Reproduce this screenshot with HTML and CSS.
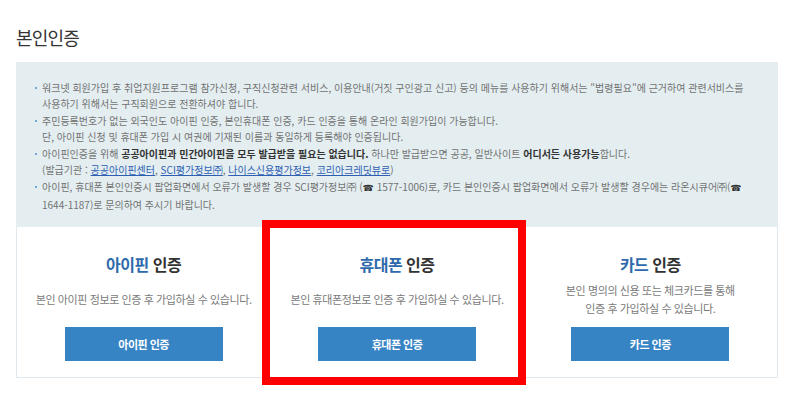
FILE: index.html
```html
<!DOCTYPE html>
<html lang="ko">
<head>
<meta charset="utf-8">
<link rel="stylesheet" href="styles.css">
</head>
<body>
<div class="page">
  <h1 class="title">본인인증</h1>
  <div class="info">
    <ul class="notes">
      <li>워크넷 회원가입 후 취업지원프로그램 참가신청, 구직신청관련 서비스, 이용안내(거짓 구인광고 신고) 등의 메뉴를 사용하기 위해서는 "법령필요"에 근거하여 관련서비스를<br>사용하기 위해서는 구직회원으로 전환하셔야 합니다.</li>
      <li>주민등록번호가 없는 외국인도 아이핀 인증, 본인휴대폰 인증, 카드 인증을 통해 온라인 회원가입이 가능합니다.<br>단, 아이핀 신청 및 휴대폰 가입 시 여권에 기재된 이름과 동일하게 등록해야 인증됩니다.</li>
      <li>아이핀인증을 위해 <b>공공아이핀과 민간아이핀을 모두 발급받을 필요는 없습니다.</b> 하나만 발급받으면 공공, 일반사이트 <b>어디서든 사용가능</b>합니다.<br>(발급기관 : <a href="#">공공아이핀센터</a>, <a href="#">SCI평가정보㈜</a>, <a href="#">나이스신용평가정보</a>, <a href="#">코리아크레딧뷰로</a>)</li>
      <li>아이핀, 휴대폰 본인인증시 팝업화면에서 오류가 발생할 경우 SCI평가정보㈜ (<span class="tel">☎</span> 1577-1006)로, 카드 본인인증시 팝업화면에서 오류가 발생할 경우에는 라온시큐어㈜(<span class="tel">☎</span><br>1644-1187)로 문의하여 주시기 바랍니다.</li>
    </ul>
  </div>
  <div class="cards">
    <div class="card">
      <h2 class="card-title"><span class="accent">아이핀</span> 인증</h2>
      <p class="card-desc">본인 아이핀 정보로 인증 후 가입하실 수 있습니다.</p>
      <a class="btn" href="#">아이핀 인증</a>
    </div>
    <div class="card">
      <h2 class="card-title"><span class="accent">휴대폰</span> 인증</h2>
      <p class="card-desc">본인 휴대폰정보로 인증 후 가입하실 수 있습니다.</p>
      <a class="btn" href="#">휴대폰 인증</a>
    </div>
    <div class="card">
      <h2 class="card-title"><span class="accent">카드</span> 인증</h2>
      <p class="card-desc">본인 명의의 신용 또는 체크카드를 통해<br>인증 후 가입하실 수 있습니다.</p>
      <a class="btn" href="#">카드 인증</a>
    </div>
  </div>
  <div class="highlight"></div>
</div>
</body>
</html>
```
FILE: styles.css
```css
* { box-sizing: border-box; }
html, body { margin: 0; padding: 0; background: #fff; }
body {
  font-family: "Noto Sans CJK KR", "Noto Sans", sans-serif;
  color: #333;
}
.page {
  position: relative;
  width: 800px;
  height: 406px;
  padding: 0 22px 0 16px;
}
.title {
  margin: 0;
  padding-top: 24px;
  height: 62px;
  font-size: 18px;
  line-height: 26px;
  font-weight: 400;
  letter-spacing: -0.8px;
  color: #333;
}
.info {
  background: #e4eef1;
  height: 165px;
  padding: 18px 10px 0 19px;
}
.notes {
  list-style: none;
  margin: 0;
  padding: 0;
  font-size: 10px;
  line-height: 15.5px;
  letter-spacing: 0;
  color: #727272;
}
.notes li {
  position: relative;
  padding-left: 7px;
  margin-bottom: 2px;
  white-space: nowrap;
}
.notes li::before {
  content: "";
  position: absolute;
  left: 0;
  top: 7px;
  width: 2px;
  height: 2px;
  background: #6fa8d6;
}
.notes b { color: #333; font-weight: 700; }
.notes a { color: #2f5fb3; text-decoration: underline; }
.tel { font-family: "DejaVu Sans", sans-serif; color: #333; font-size: 9px; }
.cards {
  display: grid;
  grid-template-columns: repeat(3, 1fr);
  border: 1px solid #e1e9ee;
  border-top: 0;
  height: 151px;
}
.card {
  display: flex;
  flex-direction: column;
  align-items: center;
  padding-top: 25px;
}
.card-title {
  margin: 0;
  font-size: 16px;
  line-height: 24px;
  font-weight: 700;
  letter-spacing: -0.5px;
  color: #333;
}
.accent { color: #2e6aab; }
.card-desc {
  margin: 3px 0 0;
  height: 40px;
  display: flex;
  align-items: center;
  text-align: center;
  font-size: 11px;
  line-height: 18px;
  letter-spacing: -0.4px;
  color: #7a7a7a;
}
.btn {
  margin-top: 8px;
  width: 158px;
  height: 34px;
  display: flex;
  align-items: center;
  justify-content: center;
  background: #3784c5;
  color: #fff;
  font-size: 11px;
  font-weight: 700;
  letter-spacing: -0.5px;
  text-decoration: none;
}
.highlight {
  position: absolute;
  left: 262px;
  top: 220px;
  width: 264px;
  height: 165px;
  border: 8px solid #ff0000;
}
```
